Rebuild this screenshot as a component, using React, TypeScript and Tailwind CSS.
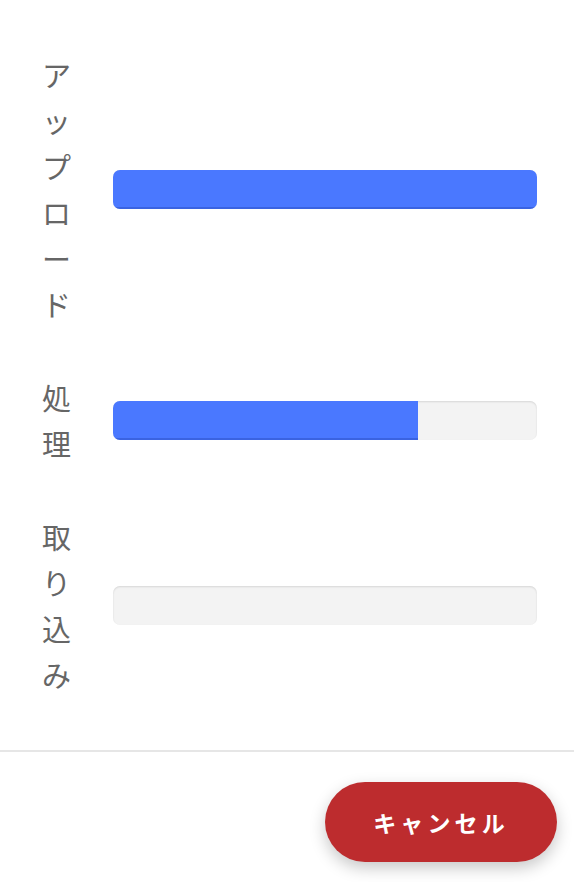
const steps = [
  { label: 'アップロード', value: 100 },
  { label: '処理', value: 72 },
  { label: '取り込み', value: 0 },
];

const App = () => {
  return (
    <div
      className="w-[574px] h-[882px] bg-white flex flex-col"
      style={{ fontFamily: '"Noto Sans CJK JP", "Noto Sans", sans-serif' }}
    >
      {/* Progress rows */}
      <div className="flex flex-col gap-[47px] pt-[51px] pl-[41px] pr-[37px]">
        {steps.map((step) => (
          <div key={step.label} className="flex items-center gap-[41px]">
            <div className="w-[31px] flex flex-col items-center text-[29px] leading-[46px] text-[#666666]">
              {Array.from(step.label).map((ch, i) => (
                <span key={i}>{ch}</span>
              ))}
            </div>
            <div className="flex-1 h-[39px] rounded-[7px] bg-[#f3f3f3] shadow-[inset_0_1px_2px_rgba(0,0,0,0.12)] overflow-hidden">
              {step.value > 0 && (
                <div
                  className="h-full bg-[#4a78ff] shadow-[inset_0_-2px_0_rgba(30,60,170,0.35)]"
                  style={{ width: `${step.value}%` }}
                />
              )}
            </div>
          </div>
        ))}
      </div>

      {/* Footer */}
      <div className="mt-[53px] border-t-2 border-[#e6e6e6] flex justify-end pt-[30px] pr-[17px]">
        <button className="w-[232px] h-[80px] rounded-full bg-[#bd2c2e] text-white text-[23px] font-bold tracking-[0.18em] shadow-[0_6px_16px_rgba(0,0,0,0.22)]">
          キャンセル
        </button>
      </div>
    </div>
  );
};

export default App;
